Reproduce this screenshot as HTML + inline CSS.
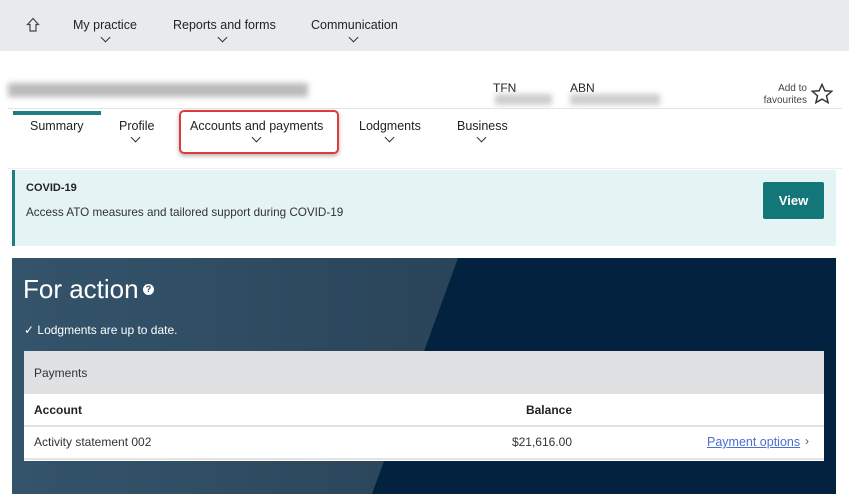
<!DOCTYPE html>
<html><head><meta charset="utf-8"><style>
*{box-sizing:border-box;margin:0;padding:0}
body{width:849px;height:501px;background:#fff;font-family:"Liberation Sans",Arial,sans-serif;color:#222;position:relative;overflow:hidden;font-size:12px}
.abs{position:absolute}
.top{left:0;top:0;width:849px;height:51px;background:#e8ebed}
.nav{font-size:12.5px;color:#222}
.chev{position:absolute;width:7px;height:7px;border-right:1.3px solid #333;border-bottom:1.3px solid #333;transform:rotate(45deg)}
.blur{background:#ccc;filter:blur(3px)}
</style></head><body>
<div class="abs top"></div>
<svg class="abs" style="left:26px;top:17px" width="14" height="16" viewBox="0 0 14 16"><path d="M7 1.5L1.5 7.5H4V14H10V7.5H12.5Z" fill="none" stroke="#444" stroke-width="1.2"/></svg>
<div class="abs nav" style="left:73px;top:18px">My practice</div><div class="chev" style="left:102px;top:34px"></div>
<div class="abs nav" style="left:173px;top:18px">Reports and forms</div><div class="chev" style="left:219px;top:34px"></div>
<div class="abs nav" style="left:311px;top:18px">Communication</div><div class="chev" style="left:350px;top:34px"></div>

<div class="abs blur" style="left:8px;top:83px;width:300px;height:14px;background:#bbb"></div>
<div class="abs" style="left:493px;top:81px;font-size:12px">TFN</div>
<div class="abs" style="left:570px;top:81px;font-size:12px">ABN</div>
<div class="abs blur" style="left:495px;top:94px;width:57px;height:11px"></div>
<div class="abs blur" style="left:570px;top:94px;width:90px;height:11px"></div>
<div class="abs" style="left:750px;top:83px;font-size:10px;color:#444;text-align:right;width:57px;line-height:12px">Add to<br>favourites</div>
<svg class="abs" style="left:811px;top:83px" width="22" height="21" viewBox="0 0 24 23"><path d="M12 1.5l3.1 7 7.5.6-5.7 5 1.8 7.4L12 17.6l-6.7 3.9 1.8-7.4-5.7-5 7.5-.6z" fill="none" stroke="#333" stroke-width="1.6"/></svg>
<div class="abs" style="left:8px;top:108px;width:834px;height:1px;background:#e4e4e4"></div>
<div class="abs" style="left:13px;top:111px;width:88px;height:4px;background:#1d7f80"></div>
<div class="abs nav" style="left:30px;top:119px">Summary</div>
<div class="abs nav" style="left:119px;top:119px">Profile</div><div class="chev" style="left:132px;top:134px"></div>
<div class="abs nav" style="left:190px;top:119px">Accounts and payments</div><div class="chev" style="left:253px;top:134px"></div>
<div class="abs" style="left:179px;top:110px;width:160px;height:44px;border:2px solid #e03a3a;border-radius:5px;box-shadow:0 2px 4px rgba(0,0,0,.3)"></div>
<div class="abs nav" style="left:359px;top:119px">Lodgments</div><div class="chev" style="left:386px;top:134px"></div>
<div class="abs nav" style="left:457px;top:119px">Business</div><div class="chev" style="left:478px;top:134px"></div>
<div class="abs" style="left:8px;top:168px;width:834px;height:1px;background:#eee"></div>

<div class="abs" style="left:12px;top:170px;width:824px;height:76px;background:#e4f3f3;border-left:3px solid #1d7f80"></div>
<div class="abs" style="left:26px;top:182px;font-size:11px;font-weight:bold">COVID-19</div>
<div class="abs" style="left:26px;top:206px;font-size:11.7px;color:#333">Access ATO measures and tailored support during COVID-19</div>
<div class="abs" style="left:763px;top:182px;width:61px;height:37px;background:#137779;color:#fff;font-weight:bold;font-size:13px;text-align:center;line-height:37px;border-radius:2px">View</div>

<svg class="abs" style="left:12px;top:258px" width="824" height="236"><rect width="824" height="236" fill="#03223f"/><defs><linearGradient id="g" x1="0" x2="1"><stop offset="0" stop-color="#34546b"/><stop offset="1" stop-color="#2a4459"/></linearGradient></defs><path d="M0 0H446L360 236H0Z" fill="url(#g)"/></svg>
<div class="abs" style="left:23px;top:274px;font-size:26px;color:#fff">For action</div>
<div class="abs" style="left:143px;top:284px;width:11px;height:11px;border-radius:50%;background:#fff;color:#2d4a5f;font-size:9px;font-weight:bold;text-align:center;line-height:11px">?</div>
<div class="abs" style="left:24px;top:323px;font-size:12px;color:#fff">✓ Lodgments are up to date.</div>

<div class="abs" style="left:24px;top:351px;width:800px;height:110px;background:#fff"></div>
<div class="abs" style="left:24px;top:351px;width:800px;height:43px;background:#dfe1e2"></div>
<div class="abs" style="left:34px;top:366px;font-size:12px;color:#333">Payments</div>
<div class="abs" style="left:34px;top:403px;font-size:12px;font-weight:bold">Account</div>
<div class="abs" style="left:520px;top:403px;font-size:12px;font-weight:bold;width:52px;text-align:right">Balance</div>
<div class="abs" style="left:24px;top:425px;width:800px;height:2px;background:#dfe1e2"></div>
<div class="abs" style="left:34px;top:435px;font-size:12px;color:#333">Activity statement 002</div>
<div class="abs" style="left:480px;top:435px;font-size:12px;color:#333;width:92px;text-align:right">$21,616.00</div>
<div class="abs" style="left:707px;top:435px;font-size:12.5px;color:#4a6fd1;text-decoration:underline">Payment options</div>
<div class="abs" style="left:805px;top:434px;font-size:12px;color:#555">›</div>
<div class="abs" style="left:24px;top:458px;width:800px;height:2px;background:#e4e4e4"></div>
</body></html>
